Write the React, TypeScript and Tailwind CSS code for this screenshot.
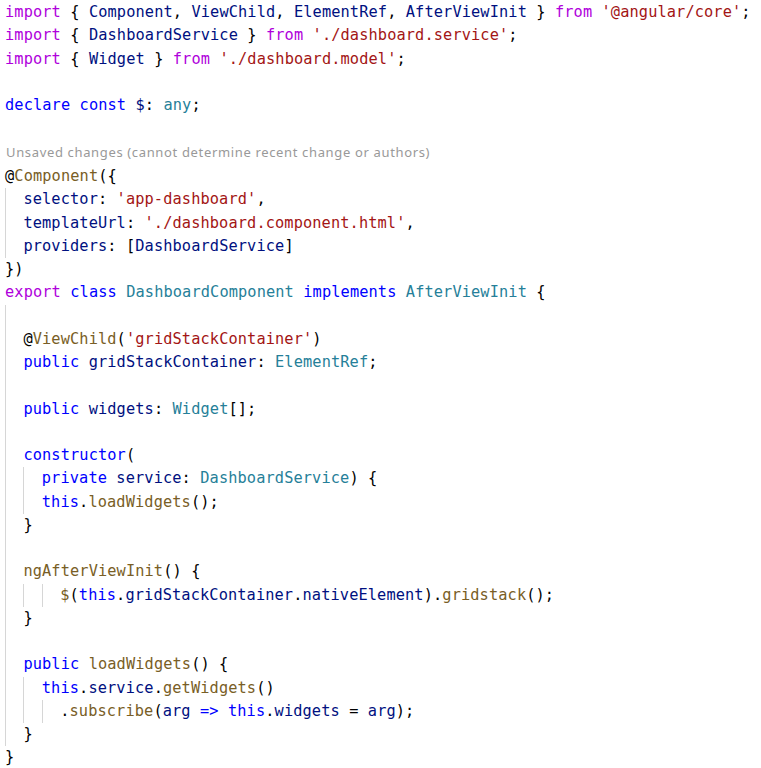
type Tok = [string, string];
type Line = { g?: number; toks?: Tok[]; lens?: string };

// token colours, VS Code light+
const C: Record<string, string> = {
  k: 'text-[#af00db]',
  b: 'text-[#0000ff]',
  v: 'text-[#001080]',
  t: 'text-[#267f99]',
  s: 'text-[#a31515]',
  f: 'text-[#795e26]',
  p: 'text-black',
};

const lines: Line[] = [
  { toks: [['import', 'k'], [' { ', 'p'], ['Component', 'v'], [', ', 'p'], ['ViewChild', 'v'], [', ', 'p'], ['ElementRef', 'v'], [', ', 'p'], ['AfterViewInit', 'v'], [' } ', 'p'], ['from', 'k'], [' ', 'p'], ["'@angular/core'", 's'], [';', 'p']] },
  { toks: [['import', 'k'], [' { ', 'p'], ['DashboardService', 'v'], [' } ', 'p'], ['from', 'k'], [' ', 'p'], ["'./dashboard.service'", 's'], [';', 'p']] },
  { toks: [['import', 'k'], [' { ', 'p'], ['Widget', 'v'], [' } ', 'p'], ['from', 'k'], [' ', 'p'], ["'./dashboard.model'", 's'], [';', 'p']] },
  {},
  { toks: [['declare', 'b'], [' ', 'p'], ['const', 'b'], [' ', 'p'], ['$', 'v'], [': ', 'p'], ['any', 't'], [';', 'p']] },
  {},
  { lens: 'Unsaved changes (cannot determine recent change or authors)' },
  { toks: [['@', 'p'], ['Component', 'f'], ['({', 'p']] },
  { g: 1, toks: [['selector', 'v'], [': ', 'p'], ["'app-dashboard'", 's'], [',', 'p']] },
  { g: 1, toks: [['templateUrl', 'v'], [': ', 'p'], ["'./dashboard.component.html'", 's'], [',', 'p']] },
  { g: 1, toks: [['providers', 'v'], [': [', 'p'], ['DashboardService', 'v'], [']', 'p']] },
  { toks: [['})', 'p']] },
  { toks: [['export', 'k'], [' ', 'p'], ['class', 'b'], [' ', 'p'], ['DashboardComponent', 't'], [' ', 'p'], ['implements', 'b'], [' ', 'p'], ['AfterViewInit', 't'], [' {', 'p']] },
  { g: 1 },
  { g: 1, toks: [['@', 'p'], ['ViewChild', 'f'], ['(', 'p'], ["'gridStackContainer'", 's'], [')', 'p']] },
  { g: 1, toks: [['public', 'b'], [' ', 'p'], ['gridStackContainer', 'v'], [': ', 'p'], ['ElementRef', 't'], [';', 'p']] },
  { g: 1 },
  { g: 1, toks: [['public', 'b'], [' ', 'p'], ['widgets', 'v'], [': ', 'p'], ['Widget', 't'], ['[];', 'p']] },
  { g: 1 },
  { g: 1, toks: [['constructor', 'b'], ['(', 'p']] },
  { g: 2, toks: [['private', 'b'], [' ', 'p'], ['service', 'v'], [': ', 'p'], ['DashboardService', 't'], [') {', 'p']] },
  { g: 2, toks: [['this', 'b'], ['.', 'p'], ['loadWidgets', 'f'], ['();', 'p']] },
  { g: 1, toks: [['}', 'p']] },
  { g: 1 },
  { g: 1, toks: [['ngAfterViewInit', 'f'], ['() {', 'p']] },
  { g: 3, toks: [['$', 'f'], ['(', 'p'], ['this', 'b'], ['.', 'p'], ['gridStackContainer', 'v'], ['.', 'p'], ['nativeElement', 'v'], [').', 'p'], ['gridstack', 'f'], ['();', 'p']] },
  { g: 1, toks: [['}', 'p']] },
  { g: 1 },
  { g: 1, toks: [['public', 'b'], [' ', 'p'], ['loadWidgets', 'f'], ['() {', 'p']] },
  { g: 2, toks: [['this', 'b'], ['.', 'p'], ['service', 'v'], ['.', 'p'], ['getWidgets', 'f'], ['()', 'p']] },
  { g: 3, toks: [['.', 'p'], ['subscribe', 'f'], ['(', 'p'], ['arg', 'v'], [' ', 'p'], ['=>', 'b'], [' ', 'p'], ['this', 'b'], ['.', 'p'], ['widgets', 'v'], [' = ', 'p'], ['arg', 'v'], [');', 'p']] },
  { g: 1, toks: [['}', 'p']] },
  { toks: [['}', 'p']] },
];

const CodeLine = ({ line }: { line: Line }) => {
  if (line.lens) {
    return (
      <div className="h-[24.5px] flex items-center pl-[1px] font-['Noto_Sans',sans-serif] text-[13px] tracking-[0.65px] text-[#999999]">
        {line.lens}
      </div>
    );
  }
  const guides = Array.from({ length: line.g ?? 0 });
  return (
    <div className="h-[23.26px] flex items-stretch whitespace-pre">
      {guides.map((_, i) => (
        <span key={i} className="w-[18.4px] shrink-0 border-l border-[#d6d6d6]" />
      ))}
      <span className="leading-[23.26px]">
        {(line.toks ?? []).map(([text, c], i) => (
          <span key={i} className={C[c]}>
            {text}
          </span>
        ))}
      </span>
    </div>
  );
};

export default function App() {
  return (
    <div className="w-[761px] h-[768px] bg-white overflow-hidden">
      <div className="pl-[5px] pt-[1px] font-['DejaVu_Sans_Mono',monospace] text-[15.3px] tracking-[0.11px]">
        {lines.map((line, i) => (
          <CodeLine key={i} line={line} />
        ))}
      </div>
    </div>
  );
}
